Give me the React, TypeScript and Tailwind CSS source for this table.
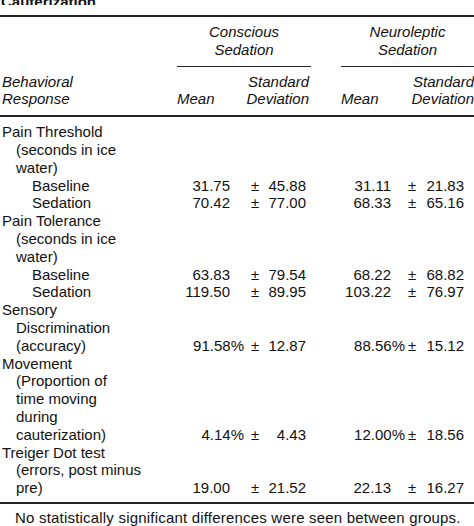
import React from "react";

type Row = {
	label: string[];
	sub?: boolean;
	values?: [string, string, string, string];
};

const rows: Row[] = [
	{ label: ["Pain Threshold", "(seconds in ice", "water)"] },
	{ label: ["Baseline"], sub: true, values: ["31.75", "45.88", "31.11", "21.83"] },
	{ label: ["Sedation"], sub: true, values: ["70.42", "77.00", "68.33", "65.16"] },
	{ label: ["Pain Tolerance", "(seconds in ice", "water)"] },
	{ label: ["Baseline"], sub: true, values: ["63.83", "79.54", "68.22", "68.82"] },
	{ label: ["Sedation"], sub: true, values: ["119.50", "89.95", "103.22", "76.97"] },
	{ label: ["Sensory", "Discrimination", "(accuracy)"], values: ["91.58%", "12.87", "88.56%", "15.12"] },
	{
		label: ["Movement", "(Proportion of", "time moving", "during", "cauterization)"],
		values: ["4.14%", "4.43", "12.00%", "18.56"],
	},
	{ label: ["Treiger Dot test", "(errors, post minus", "pre)"], values: ["19.00", "21.52", "22.13", "16.27"] },
];

// mean values keep their digits on the column edge; a trailing % hangs past it
const Mean: React.FC<{ value: string }> = ({ value }) => {
	const pct = value.endsWith("%");
	const num = pct ? value.slice(0, -1) : value;
	return (
		<div className="text-right whitespace-nowrap">
			{num}
			{pct && <span className="-mr-[14px]">%</span>}
		</div>
	);
};

const Sd: React.FC<{ value: string; pad: string }> = ({ value, pad }) => (
	<div className={`flex justify-between ${pad}`}>
		<span>±</span>
		<span>{value}</span>
	</div>
);

const App: React.FC = () => {
	return (
		<div className="w-[474px] h-[526px] overflow-hidden bg-white text-[#111] font-['Liberation_Sans',Arial,sans-serif] text-[15px] leading-[17.8px]">
			{/* tail of the caption above, cut off by the page edge */}
			<div className="h-[5px] overflow-hidden flex items-end">
				<div className="font-bold leading-[15px] -mb-[4px] pl-[1px]">Cauterization</div>
			</div>
			<div className="mt-[10px] border-t-[2px] border-[#222]" />

			<div className="mt-[6px] grid grid-cols-[177px_134px_30px_133px] italic">
				<div />
				<div className="text-center">
					Conscious
					<br />
					Sedation
				</div>
				<div />
				<div className="text-center">
					Neuroleptic
					<br />
					Sedation
				</div>
			</div>
			<div className="mt-[7px] grid grid-cols-[177px_134px_30px_133px]">
				<div />
				<div className="border-t-[1.5px] border-[#222]" />
				<div />
				<div className="border-t-[1.5px] border-[#222]" />
			</div>
			<div className="mt-[6px] grid grid-cols-[177px_134px_30px_133px] items-end italic">
				<div className="pl-[2px]">
					Behavioral
					<br />
					Response
				</div>
				<div className="flex justify-between items-end pr-[2px]">
					<span>Mean</span>
					<span className="text-right">
						Standard
						<br />
						Deviation
					</span>
				</div>
				<div />
				<div className="flex justify-between items-end">
					<span>Mean</span>
					<span className="text-right">
						Standard
						<br />
						Deviation
					</span>
				</div>
			</div>
			<div className="mt-[7px] border-t-[2.5px] border-[#222]" />

			<div className="mt-[6px]">
				{rows.map((r, i) => (
					<div key={i} className="grid grid-cols-[177px_53px_76px_85px_73px] items-end">
						<div>
							{r.label.map((l, j) => (
								<div key={j} className={r.sub ? "pl-[32px]" : j === 0 ? "pl-[2px]" : "pl-[16px]"}>
									{l}
								</div>
							))}
						</div>
						{r.values ? (
							<>
								<Mean value={r.values[0]} />
								<Sd value={r.values[1]} pad="pl-[21px]" />
								<Mean value={r.values[2]} />
								<Sd value={r.values[3]} pad="pl-[17px]" />
							</>
						) : null}
					</div>
				))}
			</div>

			<div className="mt-[5px] border-t-[2px] border-[#222]" />
			<div className="mt-[5px] pl-[15px] whitespace-nowrap tracking-[0.2px]">
				No statistically significant differences were seen between groups.
			</div>
		</div>
	);
};

export default App;
